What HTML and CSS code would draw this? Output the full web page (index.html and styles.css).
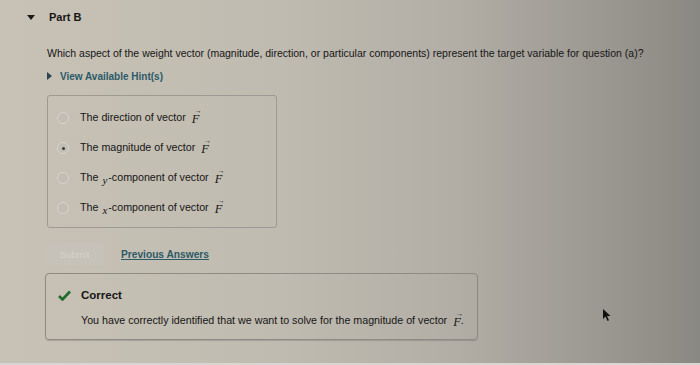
FILE: index.html
```html
<!DOCTYPE html>
<html lang="en">
<head>
    <meta charset="UTF-8">
    <title>Part B</title>
    <link rel="stylesheet" href="styles.css">
</head>
<body>

    <div class="part-header">
        <span class="caret-down"></span>
        <span class="part-title">Part B</span>
    </div>

    <div class="part-body">
        <p class="question">Which aspect of the weight vector (magnitude, direction, or particular components) represent the target variable for question (a)?</p>

        <div class="hint-link">
            <span class="caret-right"></span>
            <span>View Available Hint(s)</span>
        </div>

        <div class="choices">
            <div class="choice">
                <span class="radio"></span>
                <span class="label">The direction of vector <span class="vec">F</span></span>
            </div>
            <div class="choice">
                <span class="radio checked"></span>
                <span class="label">The magnitude of vector <span class="vec">F</span></span>
            </div>
            <div class="choice">
                <span class="radio"></span>
                <span class="label">The <span class="var">y</span>-component of vector <span class="vec">F</span></span>
            </div>
            <div class="choice">
                <span class="radio"></span>
                <span class="label">The <span class="var">x</span>-component of vector <span class="vec">F</span></span>
            </div>
        </div>

        <div class="actions">
            <button class="submit" disabled>Submit</button>
            <a class="prev-link" href="#">Previous Answers</a>
        </div>

        <div class="feedback">
            <div class="feedback-title">
                <svg class="check" width="13" height="11" viewBox="0 0 13 11">
                    <path d="M1 6 L4.5 9.5 L12 1.5" fill="none" stroke="#1f6b2a" stroke-width="2.6"/>
                </svg>
                <span>Correct</span>
            </div>
            <p class="feedback-text">You have correctly identified that we want to solve for the magnitude of vector <span class="vec">F</span>.</p>
        </div>
    </div>

    <svg class="cursor" width="10" height="14" viewBox="0 0 10 14">
        <path d="M1 1 L1 11 L3.5 8.5 L5.5 13 L7 12.3 L5 8 L8.5 8 Z" fill="#111"/>
    </svg>

</body>
</html>
```

FILE: styles.css
```css
body {
    font-family: "Liberation Sans", Arial, sans-serif;
    margin: 0;
    height: 365px;
    overflow: hidden;
    color: #161616;
    background: linear-gradient(to right, #c8c2b6 0%, #c0bbb0 40%, #b2aea6 65%, #99968f 88%, #8a8882 100%);
    border-bottom: 2px solid #d8d6d2;
    box-sizing: border-box;
    position: relative;
}
.part-header {
    display: flex;
    align-items: center;
    height: 34px;
    padding-left: 27px;
}
.caret-down {
    width: 0;
    height: 0;
    border-left: 4px solid transparent;
    border-right: 4px solid transparent;
    border-top: 5px solid #1a1a1a;
    margin-right: 14px;
}
.part-title {
    font-weight: bold;
    font-size: 11px;
}
.part-body {
    padding-left: 45px;
}
.question {
    margin: 13px 0 0 2px;
    font-size: 10.5px;
    line-height: 12px;
}
.hint-link {
    display: flex;
    align-items: center;
    margin: 11px 0 0 2px;
    height: 12px;
    font-size: 10px;
    font-weight: bold;
    color: #2b5a68;
}
.caret-right {
    width: 0;
    height: 0;
    border-top: 4px solid transparent;
    border-bottom: 4px solid transparent;
    border-left: 5px solid #2b4450;
    margin-right: 8px;
}
.choices {
    margin: 13px 0 0 2px;
    width: 230px;
    height: 133px;
    border: 1px solid #9e9a93;
    border-radius: 3px;
    padding-top: 7px;
    box-sizing: border-box;
}
.choice {
    display: flex;
    align-items: center;
    height: 30px;
    padding-left: 9px;
    font-size: 10.7px;
    white-space: nowrap;
}
.label {
    flex: none;
}
.radio {
    flex: none;
    width: 10px;
    height: 10px;
    border-radius: 50%;
    border: 1px solid #d8d4cc;
    background: #c2beb6;
    margin-right: 11px;
    display: flex;
    align-items: center;
    justify-content: center;
}
.radio.checked::after {
    content: "";
    width: 3px;
    height: 3px;
    border-radius: 50%;
    background: #3a3a3a;
}
.vec {
    position: relative;
    display: inline-block;
    font-family: "Liberation Serif", "Times New Roman", serif;
    font-style: italic;
    font-size: 12.5px;
    vertical-align: -2px;
    margin-left: 3px;
    line-height: 1;
}
.vec::before {
    content: "\2192";
    position: absolute;
    left: 3px;
    top: -5px;
    font-size: 7px;
    font-style: normal;
}
.var {
    font-family: "Liberation Serif", "Times New Roman", serif;
    font-style: italic;
    font-size: 11px;
    vertical-align: -3px;
    margin: 0 1px;
}
.actions {
    display: flex;
    align-items: center;
    margin-top: 15px;
}
.submit {
    font-family: "Liberation Sans", Arial, sans-serif;
    font-size: 9.5px;
    width: 59px;
    height: 22px;
    border: none;
    border-radius: 2px;
    background: #c6c2b9;
    color: #d6d2cb;
    padding: 0;
}
.prev-link {
    margin-left: 17px;
    font-size: 10.2px;
    font-weight: bold;
    color: #2b5a68;
    text-decoration: underline;
}
.feedback {
    margin-top: 8px;
    width: 433px;
    height: 67px;
    border: 1px solid #8f8b84;
    border-radius: 4px;
    box-shadow: 0 1px 1px rgba(0, 0, 0, 0.15);
    padding: 14px 0 0 12px;
    box-sizing: border-box;
}
.feedback-title {
    display: flex;
    align-items: center;
    height: 14px;
    font-size: 11.5px;
    font-weight: bold;
}
.check {
    margin-right: 10px;
}
.feedback-text {
    margin: 12px 0 0 23px;
    font-size: 10.7px;
    line-height: 12px;
    white-space: nowrap;
}
.cursor {
    position: absolute;
    left: 602px;
    top: 308px;
}
```
